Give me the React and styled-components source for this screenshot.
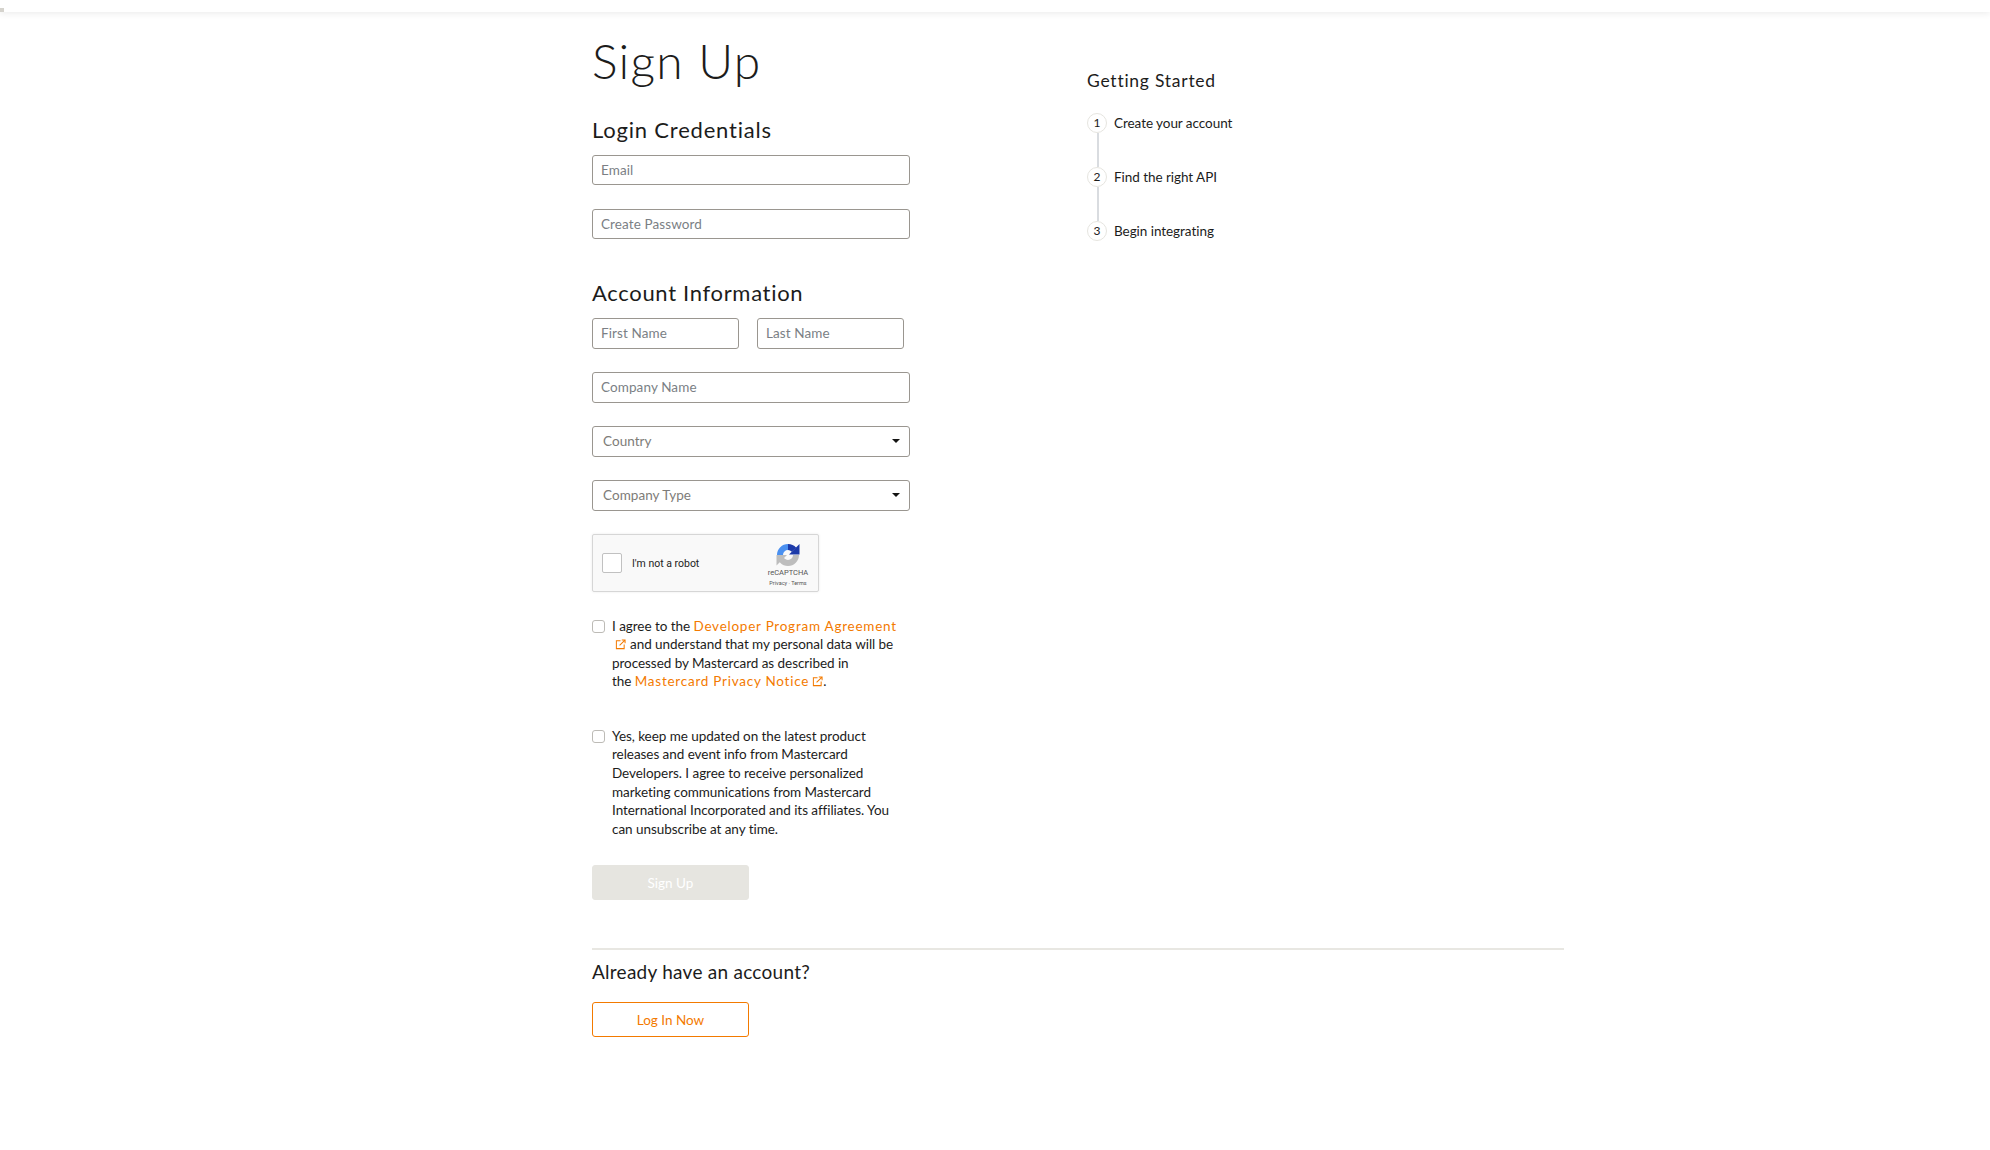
import React from "react";
import styled, { createGlobalStyle } from "styled-components";

const FONT = `"Lato", "Noto Sans", sans-serif`;
const ORANGE = "#f37a00";

const GlobalStyle = createGlobalStyle`
  html, body { margin: 0; padding: 0; background: #fff; }
  body { font-family: ${FONT}; color: #1c1c1b; }
  * { box-sizing: border-box; }
`;

const TopBar = styled.div`
  height: 12px;
  background: #fff;
  box-shadow: 0 2px 6px rgba(0, 0, 0, 0.07);
  display: flex;
  align-items: flex-end;
`;

const TopMark = styled.div`
  width: 4px;
  height: 4px;
  background: #d5d3cd;
`;

const Page = styled.div`
  margin-left: 592px;
  width: 972px;
`;

const Columns = styled.div`
  display: flex;
`;

const FormColumn = styled.div`
  width: 495px;
  padding-top: 23px;
`;

const Title = styled.h1`
  margin: 0 0 28.5px;
  font-size: 48px;
  line-height: 52px;
  font-weight: 300;
  letter-spacing: 1.25px;
`;

const SectionTitle = styled.h2`
  margin: 0 0 11px;
  font-size: 22px;
  line-height: 28px;
  font-weight: 400;
  letter-spacing: ${({ $wide }) => ($wide ? 0.8 : 0.68)}px;
`;

const Input = styled.input`
  display: block;
  width: ${({ $half }) => ($half ? "147px" : "318px")};
  height: 30.5px;
  padding: 0 8px;
  border: 1px solid #9a9690;
  border-radius: 3px;
  background: #fff;
  font-family: ${FONT};
  font-size: 13.5px;
  letter-spacing: 0.1px;
  &::placeholder { color: #7b7f85; opacity: 1; }
`;

const FieldRow = styled.div`
  display: flex;
  gap: 18px;
`;

const Field = styled.div`
  margin-bottom: ${({ $gap }) => ($gap === undefined ? 23.5 : $gap)}px;
`;

const SelectBox = styled.div`
  display: flex;
  align-items: center;
  justify-content: space-between;
  width: 318px;
  height: 30.5px;
  padding: 0 10px;
  border: 1px solid #9a9690;
  border-radius: 3px;
  font-size: 13.5px;
  letter-spacing: 0.05px;
  color: #7e7c78;
`;

const Caret = styled.span`
  width: 0;
  height: 0;
  margin-right: -1px;
  border-left: 4px solid transparent;
  border-right: 4px solid transparent;
  border-top: 4px solid #141413;
`;

const Captcha = styled.div`
  display: flex;
  align-items: center;
  width: 227px;
  height: 58px;
  margin-bottom: 24.5px;
  padding: 0 8px 0 9px;
  border: 1px solid #d6d6d6;
  border-radius: 2px;
  background: #f9f9f9;
  box-shadow: 0 0 3px rgba(0, 0, 0, 0.08);
  font-family: "Roboto", sans-serif;
`;

const CaptchaBox = styled.div`
  width: 20px;
  height: 20px;
  border: 1px solid #c1c1c1;
  border-radius: 2px;
  background: #fff;
`;

const CaptchaLabel = styled.div`
  flex: 1;
  margin-left: 10px;
  font-size: 10.5px;
  color: #222;
`;

const CaptchaBrand = styled.div`
  display: flex;
  flex-direction: column;
  align-items: center;
  width: 44px;
  padding-top: 4px;
  color: #555;
`;

const CaptchaName = styled.div`
  margin-top: 1px;
  font-size: 7.5px;
  line-height: 10px;
`;

const CaptchaLinks = styled.div`
  margin-top: 1px;
  font-size: 5.5px;
  line-height: 8px;
  white-space: nowrap;
`;

const Consent = styled.div`
  display: flex;
  gap: 7px;
  width: 318px;
  margin-bottom: ${({ $gap }) => $gap}px;
`;

const Tick = styled.div`
  flex: none;
  width: 13px;
  height: 13px;
  margin-top: 3px;
  border: 1px solid #bdbbb6;
  border-radius: 3px;
  background: #fff;
`;

const ConsentText = styled.div`
  font-size: 13.5px;
  line-height: 18.6px;
  letter-spacing: -0.05px;
`;

const Link = styled.span`
  color: ${ORANGE};
  letter-spacing: 0.75px;
`;

const OutIcon = styled.svg`
  width: 11px;
  height: 11px;
  margin: 0 ${({ $right }) => $right || 0}px -1px ${({ $left }) => $left || 0}px;
`;

const Button = styled.button`
  display: block;
  width: 157px;
  height: 35px;
  padding: 0;
  border-radius: 3px;
  border: 1px solid ${({ $outline }) => ($outline ? ORANGE : "#e6e5e0")};
  background: ${({ $outline }) => ($outline ? "#fff" : "#e6e5e0")};
  color: ${({ $outline }) => ($outline ? ORANGE : "#fff")};
  font-family: ${FONT};
  font-size: 13.5px;
  letter-spacing: 0;
`;

const Sidebar = styled.div`
  padding-top: 56.5px;
`;

const SideTitle = styled.h3`
  margin: 0 0 20px;
  font-size: 17.5px;
  line-height: 24px;
  font-weight: 400;
  letter-spacing: 0.75px;
`;

const Step = styled.div`
  display: flex;
  gap: 7px;
  height: 54px;
`;

const StepTrack = styled.div`
  display: flex;
  flex-direction: column;
  align-items: center;
  width: 20px;
`;

const StepNumber = styled.div`
  flex: none;
  width: 20px;
  height: 20px;
  border: 1px solid #e6e5e0;
  border-radius: 50%;
  font-size: 12px;
  line-height: 18px;
  text-align: center;
`;

const StepLine = styled.div`
  flex: 1;
  width: 2px;
  margin-left: 1px;
  background: #d9dce0;
`;

const StepLabel = styled.div`
  font-size: 13.5px;
  line-height: 20px;
  letter-spacing: -0.05px;
`;

const Footer = styled.div`
  margin-top: 48px;
  padding-top: 9px;
  border-top: 2px solid #e8e7e2;
`;

const FooterTitle = styled.h3`
  margin: 0 0 17px;
  font-size: 19px;
  line-height: 26px;
  font-weight: 400;
  letter-spacing: 0.26px;
`;

const STEPS = ["Create your account", "Find the right API", "Begin integrating"];

function ExternalIcon(props) {
  return (
    <OutIcon viewBox="0 0 12 12" fill="none" stroke={ORANGE} strokeWidth="1.1" {...props}>
      <path d="M6 2H1.500v8.500H10V6" />
      <path d="M5 7l5.600-5.600M7.400 1h3.600v3.600" />
    </OutIcon>
  );
}

function CaptchaLogo() {
  return (
    <svg width="24" height="24" viewBox="0 0 24 24" fill="none" strokeWidth="6">
      <path d="M20 12A8 8 0 0 1 4 12" stroke="#bdbdbd" />
      <path d="M0.500 12H11L0.500 22.500z" fill="#bdbdbd" />
      <path d="M4 12A8 8 0 0 1 12 4" stroke="#4a90f0" />
      <path d="M12 4A8 8 0 0 1 18 6.700" stroke="#1c3aa9" />
      <path d="M23.500 1V11.500H13z" fill="#1c3aa9" />
    </svg>
  );
}

export default function App() {
  return (
    <>
      <GlobalStyle />
      <TopBar>
        <TopMark />
      </TopBar>
      <Page>
        <Columns>
          <FormColumn>
            <Title>Sign Up</Title>
            <SectionTitle $wide>Login Credentials</SectionTitle>
            <Field>
              <Input placeholder="Email" />
            </Field>
            <Field $gap={40}>
              <Input placeholder="Create Password" />
            </Field>
            <SectionTitle>Account Information</SectionTitle>
            <Field>
              <FieldRow>
                <Input $half placeholder="First Name" />
                <Input $half placeholder="Last Name" />
              </FieldRow>
            </Field>
            <Field>
              <Input placeholder="Company Name" />
            </Field>
            <Field>
              <SelectBox>
                Country
                <Caret />
              </SelectBox>
            </Field>
            <Field>
              <SelectBox>
                Company Type
                <Caret />
              </SelectBox>
            </Field>
            <Captcha>
              <CaptchaBox />
              <CaptchaLabel>I'm not a robot</CaptchaLabel>
              <CaptchaBrand>
                <CaptchaLogo />
                <CaptchaName>reCAPTCHA</CaptchaName>
                <CaptchaLinks>Privacy · Terms</CaptchaLinks>
              </CaptchaBrand>
            </Captcha>
            <Consent $gap={36}>
              <Tick />
              <ConsentText>
                I agree to the <Link>Developer Program Agreement</Link>
                <br />
                <ExternalIcon $left={3} $right={4} />
                and understand that my personal data will be
                <br />
                processed by Mastercard as described in
                <br />
                the <Link>Mastercard Privacy Notice</Link>
                <ExternalIcon $left={3} />.
              </ConsentText>
            </Consent>
            <Consent $gap={27}>
              <Tick />
              <ConsentText>
                Yes, keep me updated on the latest product
                <br />
                releases and event info from Mastercard
                <br />
                Developers. I agree to receive personalized
                <br />
                marketing communications from Mastercard
                <br />
                International Incorporated and its affiliates. You
                <br />
                can unsubscribe at any time.
              </ConsentText>
            </Consent>
            <Button>Sign Up</Button>
          </FormColumn>
          <Sidebar>
            <SideTitle>Getting Started</SideTitle>
            {STEPS.map((label, i) => (
              <Step key={label}>
                <StepTrack>
                  <StepNumber>{i + 1}</StepNumber>
                  {i < STEPS.length - 1 && <StepLine />}
                </StepTrack>
                <StepLabel>{label}</StepLabel>
              </Step>
            ))}
          </Sidebar>
        </Columns>
        <Footer>
          <FooterTitle>Already have an account?</FooterTitle>
          <Button $outline>Log In Now</Button>
        </Footer>
      </Page>
    </>
  );
}
